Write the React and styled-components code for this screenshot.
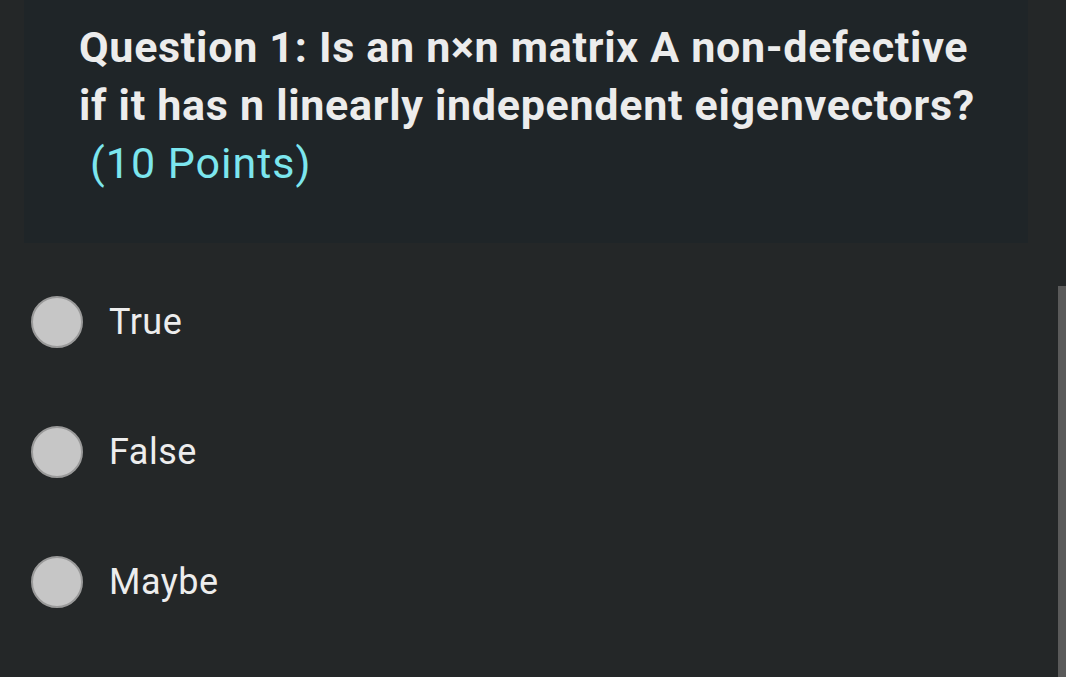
import styled, { createGlobalStyle } from "styled-components";

const GlobalStyle = createGlobalStyle`
  html, body {
    margin: 0;
    padding: 0;
    background: #242728;
    font-family: Roboto, "Noto Sans", sans-serif;
    overflow: hidden;
  }
`;

const Page = styled.div`
  width: 1066px;
  height: 677px;
  position: relative;
`;

const Card = styled.div`
  margin: 0 38px 0 24px;
  background: #1f2528;
  padding: 18px 0 51px 55px;
`;

const Line = styled.div`
  font-size: 43px;
  line-height: 58px;
  font-weight: ${(p) => (p.$points ? 400 : 700)};
  letter-spacing: ${(p) => (p.$points ? "1px" : "0.7px")};
  color: ${(p) => (p.$points ? "#7ce6ee" : "#ececec")};
  padding-left: ${(p) => (p.$points ? "11px" : "0")};
  white-space: nowrap;
`;

const Options = styled.div`
  display: flex;
  flex-direction: column;
  gap: 78px;
  padding: 53px 0 0 31px;
`;

const Option = styled.label`
  display: flex;
  align-items: center;
  gap: 26px;
  height: 52px;
`;

const Radio = styled.span`
  width: 52px;
  height: 52px;
  box-sizing: border-box;
  border-radius: 50%;
  background: #c6c6c6;
  border: 2px solid #9a9a9a;
  flex-shrink: 0;
`;

const Label = styled.span`
  font-size: 36px;
  letter-spacing: 0.5px;
  color: #ededed;
`;

const Scrollbar = styled.div`
  position: absolute;
  right: 0;
  top: 286px;
  width: 8px;
  bottom: 0;
  background: #5a5a5a;
`;

const choices = ["True", "False", "Maybe"];

export default function App() {
  return (
    <Page>
      <GlobalStyle />
      <Card>
        <Line>Question 1: Is an n×n matrix A non-defective</Line>
        <Line>if it has n linearly independent eigenvectors?</Line>
        <Line $points>(10 Points)</Line>
      </Card>
      <Options>
        {choices.map((c) => (
          <Option key={c}>
            <Radio />
            <Label>{c}</Label>
          </Option>
        ))}
      </Options>
      <Scrollbar />
    </Page>
  );
}
